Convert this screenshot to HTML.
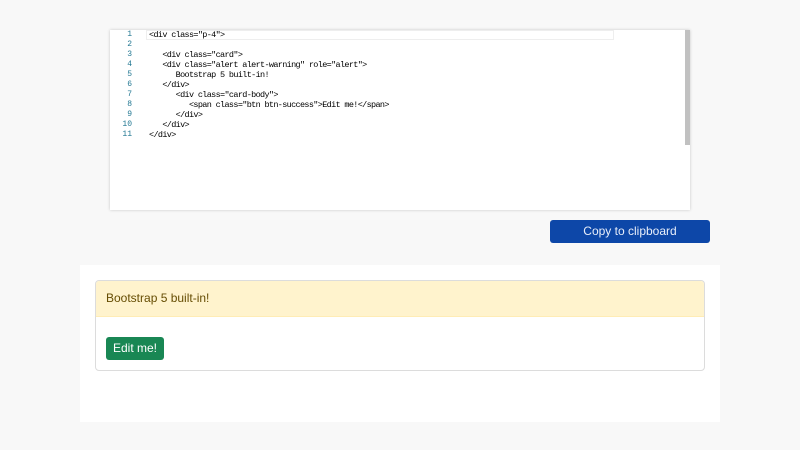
<!DOCTYPE html>
<html><head><style>
body{margin:0;width:800px;height:450px;background:#f8f8f8;font-family:"Liberation Sans",sans-serif;position:relative;overflow:hidden}
.ed{position:absolute;left:110px;top:30px;width:580px;height:180px;background:#fff;box-shadow:0 0 3px rgba(0,0,0,.2)}
.ln{position:absolute;left:0;width:22px;text-align:right;font:8px/10px "Liberation Mono",monospace;color:#237893}
.cd{position:absolute;left:39px;font:8.5px/10px "Liberation Mono",monospace;letter-spacing:-0.66px;color:#000;white-space:pre}
.cur{position:absolute;left:36px;top:0;width:468px;height:10px;border:1px solid #eee;box-sizing:border-box}
.sb{position:absolute;left:575px;top:0;width:5px;height:115px;background:#c1c1c1}
.btn{position:absolute;left:550px;top:220px;width:160px;height:23px;background:#0d47a8;border-radius:3px;color:#e8eefa;font-size:12px;line-height:23px;text-align:center}
.pn{position:absolute;left:80px;top:265px;width:640px;height:157px;background:#fff}
.card{position:absolute;left:15px;top:15px;width:608px;height:89px;border:1px solid #dcdcdc;border-radius:4px;overflow:hidden}
.al{height:35px;background:#fff3cd;border-bottom:1px solid #ffecb5;color:#664d03;font-size:12px;line-height:35px;padding-left:10px}
.gb{position:absolute;left:10px;top:56px;width:58px;height:23px;background:#198754;color:#fff;border-radius:3px;font-size:12px;line-height:23px;text-align:center}
</style></head><body>
<div class="ed">
<div class="cur"></div>
<div class="ln" style="top:0">1<br>2<br>3<br>4<br>5<br>6<br>7<br>8<br>9<br>10<br>11</div>
<div class="cd" style="top:0">&lt;div class="p-4"&gt;

   &lt;div class="card"&gt;
   &lt;div class="alert alert-warning" role="alert"&gt;
      Bootstrap 5 built-in!
   &lt;/div&gt;
      &lt;div class="card-body"&gt;
         &lt;span class="btn btn-success"&gt;Edit me!&lt;/span&gt;
      &lt;/div&gt;
   &lt;/div&gt;
&lt;/div&gt;</div>
<div class="sb"></div>
</div>
<div class="btn">Copy to clipboard</div>
<div class="pn"><div class="card"><div class="al">Bootstrap 5 built-in!</div><div class="gb">Edit me!</div></div></div>
</body></html>
